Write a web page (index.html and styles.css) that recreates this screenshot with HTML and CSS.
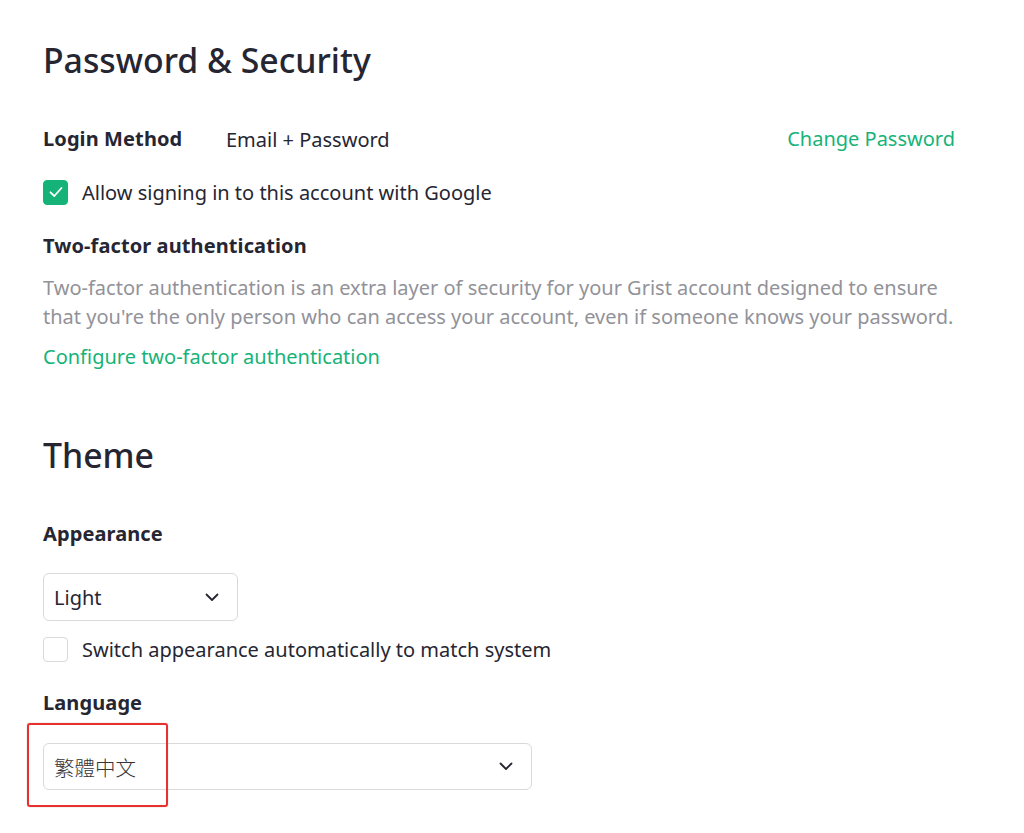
FILE: index.html
```html
<!DOCTYPE html>
<html>
<head>
<meta charset="utf-8">
<link rel="stylesheet" href="styles.css">
</head>
<body>
<div class="page">
  <h1 class="title">Password &amp; Security</h1>
  <div class="login-row">
    <span class="label">Login Method</span>
    <span class="value">Email + Password</span>
    <span class="spacer"></span>
    <a class="link">Change Password</a>
  </div>
  <div class="check-row google-row">
    <span class="checkbox checked">
      <svg width="16" height="16" viewBox="0 0 16 16"><path d="M2.5 8.3 L6.3 12 L13.5 4" fill="none" stroke="#fff" stroke-width="1.8" stroke-linecap="round" stroke-linejoin="round"/></svg>
    </span>
    <span>Allow signing in to this account with Google</span>
  </div>
  <div class="label tfa-heading">Two-factor authentication</div>
  <p class="desc">Two-factor authentication is an extra layer of security for your Grist account designed to ensure that you're the only person who can access your account, even if someone knows your password.</p>
  <a class="link config">Configure two-factor authentication</a>

  <h1 class="title theme">Theme</h1>
  <div class="label appearance">Appearance</div>
  <div class="select small-select">
    <span>Light</span>
    <svg class="chev" width="14" height="9" viewBox="0 0 14 9"><path d="M1.5 1.5 L7 7 L12.5 1.5" fill="none" stroke="#262633" stroke-width="1.8" stroke-linecap="round" stroke-linejoin="round"/></svg>
  </div>
  <div class="check-row switch-row">
    <span class="checkbox"></span>
    <span>Switch appearance automatically to match system</span>
  </div>
  <div class="label language">Language</div>
  <div class="lang-wrap">
    <div class="select lang-select">
      <span class="cjk">繁體中文</span>
      <svg class="chev" width="14" height="9" viewBox="0 0 14 9"><path d="M1.5 1.5 L7 7 L12.5 1.5" fill="none" stroke="#262633" stroke-width="1.8" stroke-linecap="round" stroke-linejoin="round"/></svg>
    </div>
    <div class="highlight"></div>
  </div>
</div>
</body>
</html>
```
FILE: styles.css
```css
html, body {
  margin: 0;
  padding: 0;
  background: #ffffff;
}
body {
  font-family: "Noto Sans", "Open Sans", sans-serif;
  font-size: 20px;
  color: #262633;
}
.page {
  padding: 38px 0 40px 43px;
  width: 912px;
}
.title {
  margin: 0;
  font-size: 33.8px;
  font-weight: 500;
  line-height: 44px;
  color: #262633;
}
.login-row {
  display: flex;
  align-items: center;
  height: 28px;
  margin-top: 43px;
}
.label {
  font-weight: 700;
  line-height: 28px;
  letter-spacing: 0.1px;
}
.login-row .label {
  width: 183px;
}
.spacer { flex: 1; }
.link {
  color: #16b378;
  text-decoration: none;
  line-height: 28px;
}
.check-row {
  display: flex;
  align-items: center;
  height: 28px;
  gap: 14px;
}
.google-row { margin-top: 25px; }
.checkbox {
  width: 23px;
  height: 23px;
  border: 1px solid #d9d9d9;
  border-radius: 4px;
  box-sizing: content-box;
  display: flex;
  align-items: center;
  justify-content: center;
  flex: none;
}
.checkbox.checked {
  background: #16b378;
  border-color: #16b378;
}
.tfa-heading { margin-top: 26px; }
.desc {
  margin: 14px 0 0;
  line-height: 28.5px;
  color: #929299;
  width: 912px;
}
.config {
  display: block;
  margin-top: 12px;
}
.theme { margin-top: 62px; }
.appearance { margin-top: 43px; }
.select {
  box-sizing: border-box;
  height: 48px;
  border: 1px solid #d9d9d9;
  border-radius: 6px;
  display: flex;
  align-items: center;
  justify-content: space-between;
  padding: 0 18px 0 10px;
}
.small-select {
  width: 195px;
  margin-top: 25px;
}
.switch-row { margin-top: 14px; }
.language { margin-top: 26px; }
.lang-wrap {
  position: relative;
  margin-top: 26px;
  width: 489px;
}
.lang-select {
  height: 47px;
  width: 489px;
}
.cjk {
  font-family: "Noto Sans CJK TC", "Noto Sans CJK SC", sans-serif;
  font-size: 20.5px;
  font-weight: 300;
  color: #333338;
}
.highlight {
  position: absolute;
  left: -16px;
  top: -20px;
  width: 141px;
  height: 84px;
  box-sizing: border-box;
  border: 2.5px solid #e8312f;
  border-radius: 3px;
  box-shadow: 0 0 1px rgba(80, 0, 0, 0.5);
}
```
